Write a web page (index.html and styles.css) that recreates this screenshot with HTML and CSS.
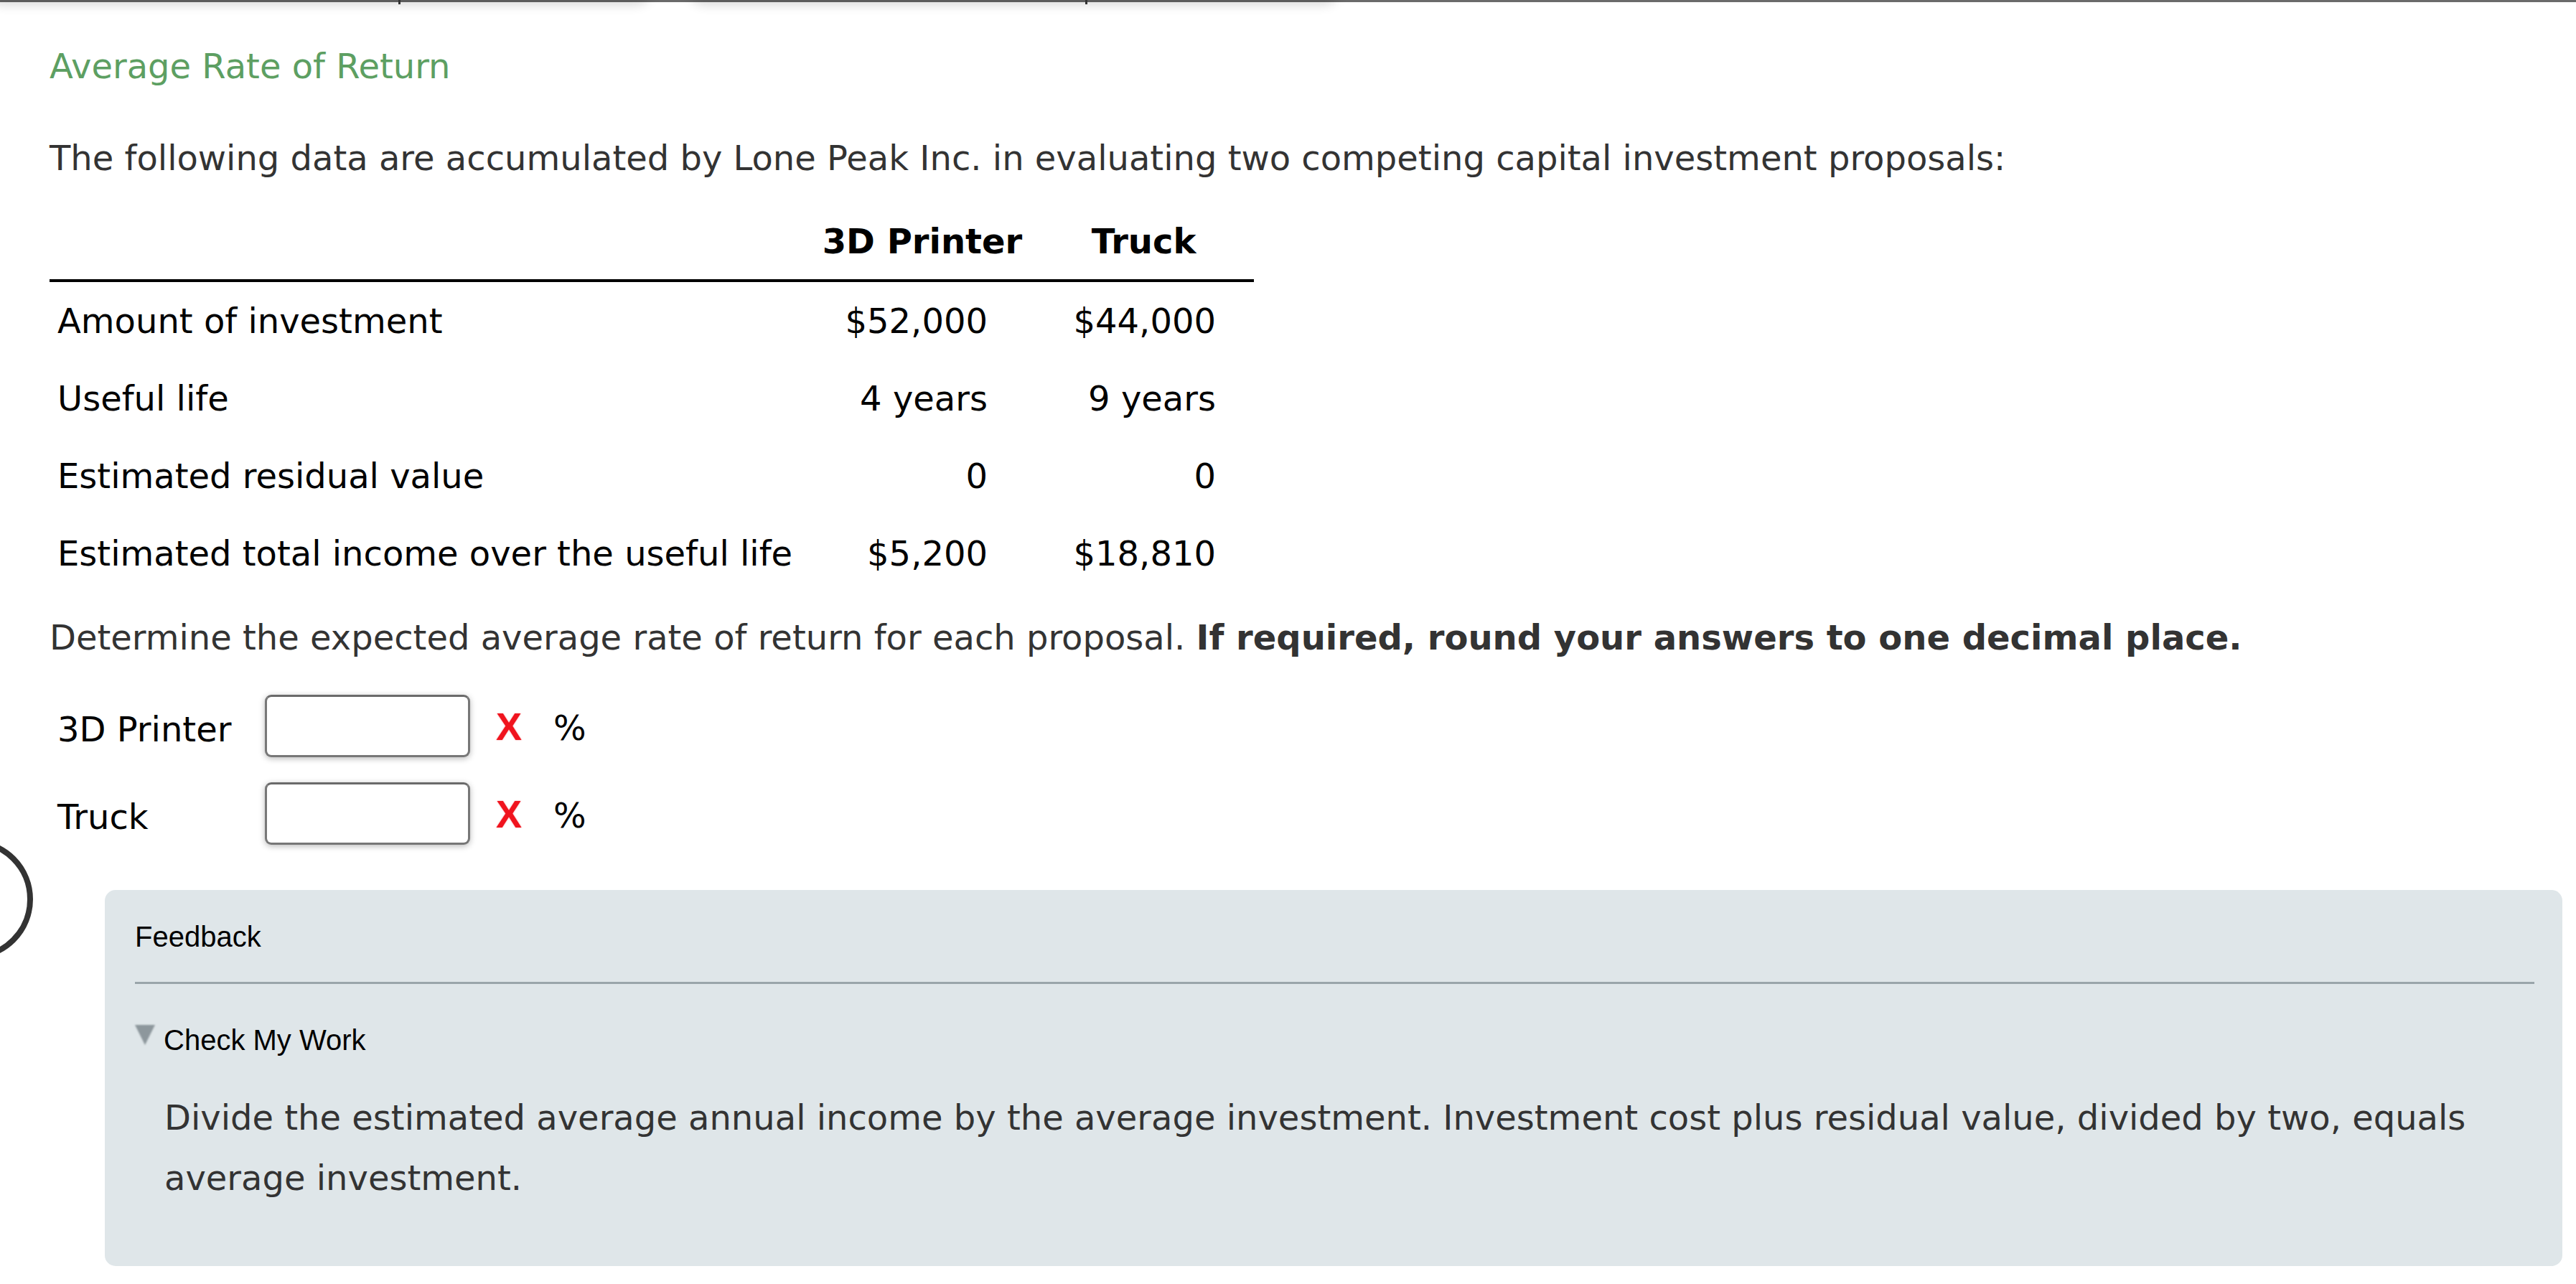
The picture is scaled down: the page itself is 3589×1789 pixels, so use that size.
FILE: index.html
```html
<!DOCTYPE html>
<html lang="en">
<head>
<meta charset="utf-8">
<title>Average Rate of Return</title>
<link rel="stylesheet" href="styles.css">
</head>
<body>
<div class="topbar">
  <div class="tab tab-one"></div>
  <div class="tab tab-two"></div>
  <span class="tick tick-one"></span>
  <span class="tick tick-two"></span>
</div>
<div class="side-ring"></div>
<main class="content">
  <h1 class="title">Average Rate of Return</h1>
  <p class="intro">The following data are accumulated by Lone Peak Inc. in evaluating two competing capital investment proposals:</p>

  <div class="data-table">
    <div class="cell head"></div>
    <div class="cell head col-a">3D Printer</div>
    <div class="cell head col-b">Truck</div>

    <div class="cell label">Amount of investment</div>
    <div class="cell num col-a">$52,000</div>
    <div class="cell num col-b">$44,000</div>

    <div class="cell label">Useful life</div>
    <div class="cell num col-a">4 years</div>
    <div class="cell num col-b">9 years</div>

    <div class="cell label">Estimated residual value</div>
    <div class="cell num col-a">0</div>
    <div class="cell num col-b">0</div>

    <div class="cell label">Estimated total income over the useful life</div>
    <div class="cell num col-a">$5,200</div>
    <div class="cell num col-b">$18,810</div>
  </div>

  <p class="question">Determine the expected average rate of return for each proposal. <strong>If required, round your answers to one decimal place.</strong></p>

  <div class="answers">
    <div class="answer-row">
      <span class="answer-label">3D Printer</span>
      <span class="answer-input"></span>
      <span class="wrong">X</span>
      <span class="unit">%</span>
    </div>
    <div class="answer-row">
      <span class="answer-label">Truck</span>
      <span class="answer-input"></span>
      <span class="wrong">X</span>
      <span class="unit">%</span>
    </div>
  </div>

  <section class="feedback">
    <div class="feedback-title">Feedback</div>
    <div class="feedback-rule"></div>
    <div class="check-head"><span class="tri"></span><span class="check-text">Check My Work</span></div>
    <p class="hint">Divide the estimated average annual income by the average investment. Investment cost plus residual value, divided by two, equals average investment.</p>
  </section>
</main>
</body>
</html>
```

FILE: styles.css
```css
html, body {
  margin: 0;
  padding: 0;
  background: #ffffff;
}

body {
  position: relative;
  font-family: "DejaVu Sans", Verdana, sans-serif;
  font-size: 48px;
  color: #333333;
  overflow: hidden;
  min-height: 1789px;
}

.topbar {
  position: relative;
  height: 3px;
  background: #6a6a6a;
}

.tab {
  position: absolute;
  top: -40px;
  height: 40px;
  background: #ffffff;
  border-radius: 0 0 24px 24px;
  box-shadow: 0 6px 16px rgba(0, 0, 0, 0.16);
}

.tab-one {
  left: -20px;
  width: 929px;
}

.tab-two {
  left: 958px;
  width: 909px;
}

.tick {
  position: absolute;
  top: 0;
  width: 3px;
  height: 6px;
  background: #333333;
}

.tick-one { left: 555px; }
.tick-two { left: 1512px; }

.side-ring {
  position: absolute;
  left: -122px;
  top: 1169px;
  width: 152px;
  height: 152px;
  border: 8px solid #333333;
  border-radius: 50%;
}

.content {
  padding: 0 19px 0 69px;
}

.title {
  margin: 61px 0 0 0;
  font-size: 48px;
  font-weight: normal;
  line-height: 56px;
  color: #5d9f62;
}

.intro {
  margin: 72px 0 0 0;
  line-height: 56px;
}

.data-table {
  margin-top: 60px;
  width: 1678px;
  display: grid;
  grid-template-columns: 1061px 310px 307px;
  color: #000000;
}

.cell.head {
  font-weight: bold;
  line-height: 56px;
  padding-bottom: 25px;
  border-bottom: 4px solid #000000;
  text-align: center;
}

.cell.label {
  line-height: 108px;
  padding-left: 11px;
}

.cell.num {
  line-height: 108px;
  text-align: right;
}

.cell.num.col-a { padding-right: 64px; }
.cell.num.col-b { padding-right: 53px; }

.question {
  margin: 35px 0 0 0;
  line-height: 56px;
}

.question strong {
  font-weight: bold;
}

.answers {
  margin-top: 52px;
  display: flex;
  flex-direction: column;
  gap: 35px;
}

.answer-row {
  display: flex;
  align-items: center;
  color: #000000;
}

.answer-label {
  width: 300px;
  padding-left: 11px;
  box-sizing: border-box;
  padding-top: 8px;
}

.answer-input {
  width: 286px;
  height: 87px;
  box-sizing: border-box;
  border: 3px solid #777777;
  border-top-color: #6a6a6a;
  border-radius: 9px;
  background: #ffffff;
  box-shadow: 0 2px 8px rgba(0, 0, 0, 0.28);
}

.wrong {
  margin-left: 36px;
  font-family: "Liberation Sans", Arial, sans-serif;
  font-weight: bold;
  font-size: 54px;
  color: #f0141e;
  text-shadow: 0 0 2px rgba(240, 20, 30, 0.5);
}

.unit {
  margin-left: 44px;
  padding-top: 4px;
}

.feedback {
  margin: 63px 0 0 77px;
  padding: 42px 39px 81px 42px;
  background: #dfe6e9;
  border-radius: 15px;
}

.feedback-title {
  font-family: "Liberation Sans", Arial, sans-serif;
  font-size: 40px;
  line-height: 46px;
  color: #000000;
}

.feedback-rule {
  margin-top: 40px;
  height: 3px;
  background: #9aa5aa;
}

.check-head {
  margin-top: 55px;
  display: flex;
  align-items: center;
  font-family: "Liberation Sans", Arial, sans-serif;
  font-size: 40px;
  line-height: 46px;
  color: #000000;
}

.tri {
  width: 0;
  height: 0;
  border-left: 14px solid transparent;
  border-right: 14px solid transparent;
  border-top: 28px solid #8d979c;
  margin-right: 12px;
  margin-top: -14px;
  filter: blur(1px);
}

.hint {
  margin: 43px 0 0 41px;
  line-height: 84px;
  color: #333333;
}
```
